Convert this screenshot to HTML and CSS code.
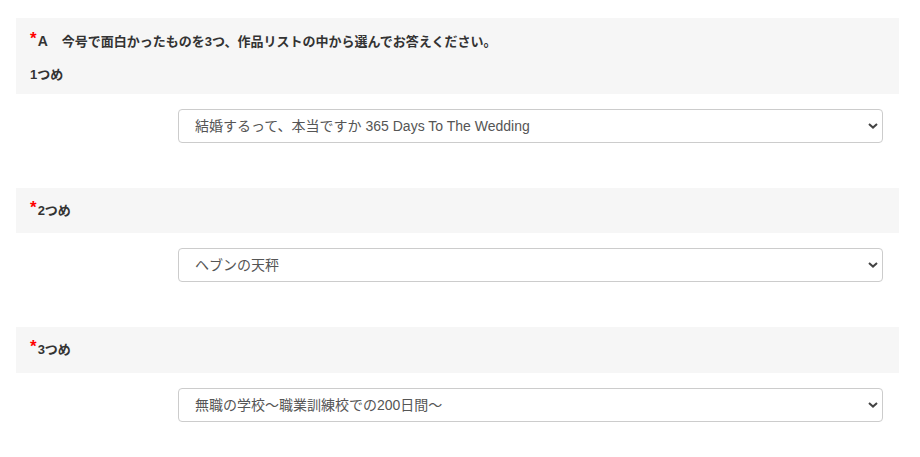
FILE: index.html
```html
<!DOCTYPE html>
<html lang="ja">
<head>
<meta charset="utf-8">
<title>アンケート</title>
<link rel="stylesheet" href="styles.css">
</head>
<body>
<form class="survey">
  <div class="band band-first">
    <div class="question"><span class="req">*</span><span class="qno">A</span>今号で面白かったものを3つ、作品リストの中から選んでお答えください。</div>
    <div class="label">1つめ</div>
  </div>
  <div class="row">
    <select class="control">
      <option>結婚するって、本当ですか 365 Days To The Wedding</option>
    </select>
  </div>

  <div class="band">
    <div class="label"><span class="req">*</span>2つめ</div>
  </div>
  <div class="row">
    <select class="control">
      <option>ヘブンの天秤</option>
    </select>
  </div>

  <div class="band band-last">
    <div class="label"><span class="req">*</span>3つめ</div>
  </div>
  <div class="row">
    <select class="control">
      <option>無職の学校～職業訓練校での200日間～</option>
    </select>
  </div>
</form>
</body>
</html>
```

FILE: styles.css
```css
html, body {
  margin: 0;
  padding: 0;
  background: #fff;
}

body {
  font-family: "Liberation Sans", "Noto Sans CJK JP", sans-serif;
  color: #333;
}

.survey {
  padding: 18px 21px 0 16px;
  display: flex;
  flex-direction: column;
}

.band {
  background: #f6f6f6;
  height: 45px;
  padding: 0 14px;
  box-sizing: border-box;
  display: flex;
  flex-direction: column;
  justify-content: center;
}

.band-first {
  height: 76px;
  justify-content: flex-start;
  padding-top: 11px;
}

.band-last {
  height: 46px;
}

.question,
.label {
  font-size: 13px;
  font-weight: bold;
  line-height: 24px;
  color: #333;
  white-space: nowrap;
}

.band-first .label {
  margin-top: 9px;
}

.req {
  color: #f00;
  font-size: 17px;
  line-height: 1;
  font-weight: bold;
  position: relative;
  top: -2px;
  margin-right: 1px;
}

.qno {
  font-size: 14px;
  margin-right: 14px;
}

.row {
  display: flex;
  padding: 15px 16px 45px 162px;
}

.control {
  flex: 1;
  height: 34px;
  box-sizing: border-box;
  border: 1px solid #ccc;
  border-radius: 4px;
  background-color: #fff;
  padding: 0 30px 0 16px;
  font-family: "Liberation Sans", "Noto Sans CJK JP", sans-serif;
  font-size: 14px;
  color: #555;
  -webkit-appearance: none;
  appearance: none;
  background-image: url("data:image/svg+xml;utf8,<svg xmlns='http://www.w3.org/2000/svg' width='10' height='6' viewBox='0 0 10 6'><path d='M1 1 L5 4.6 L9 1' fill='none' stroke='%23444' stroke-width='2'/></svg>");
  background-repeat: no-repeat;
  background-position: right 4px center;
  background-position-x: calc(100% - 4px);
}
```
